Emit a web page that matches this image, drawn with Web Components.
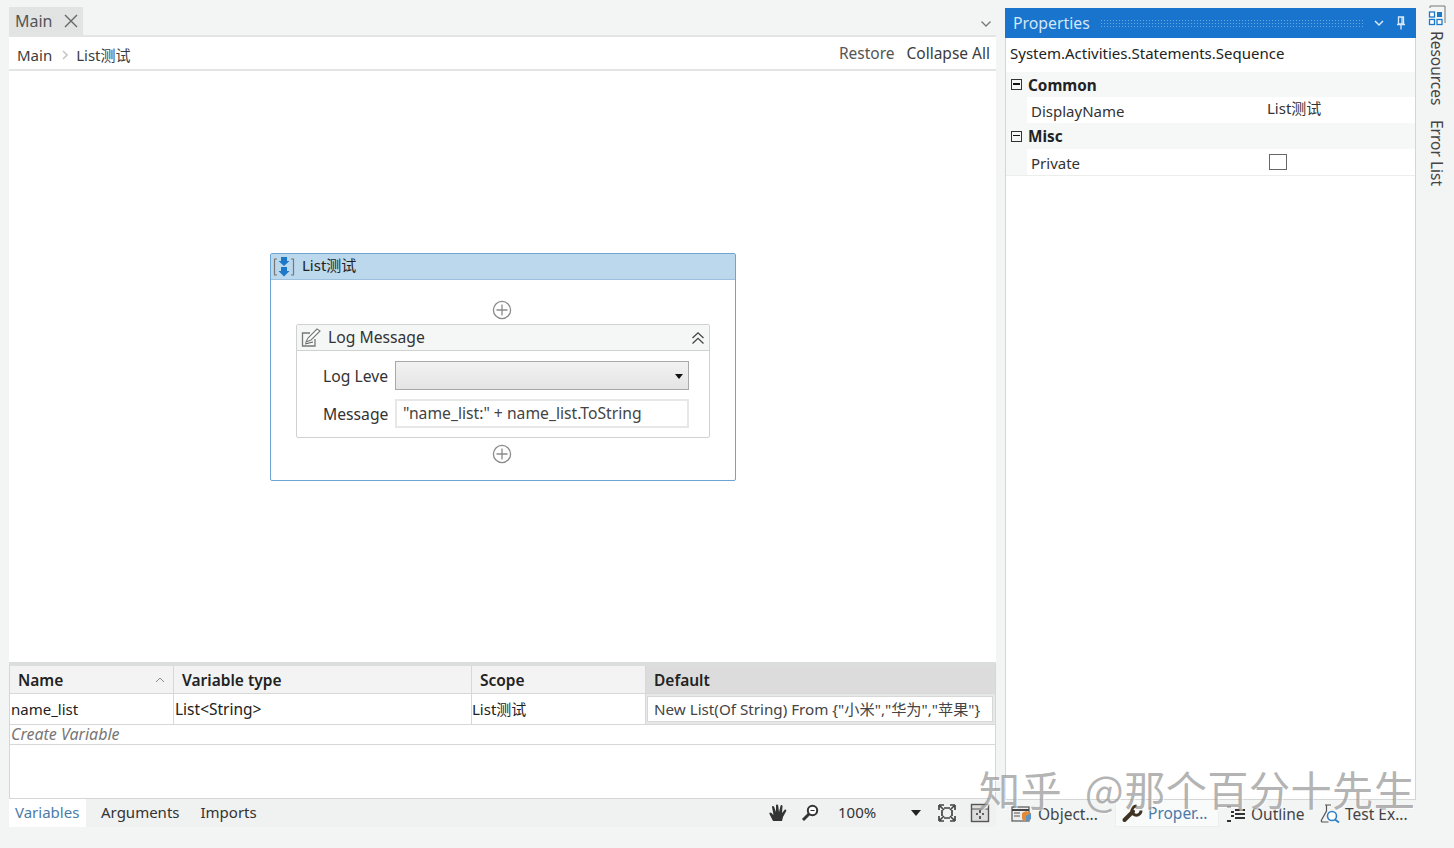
<!DOCTYPE html>
<html lang="zh"><head><meta charset="utf-8"><title>Main</title>
<style>
html,body{margin:0;height:100%;}
body{background:#f3f5f5;font:15px "Noto Sans","Noto Sans CJK SC",sans-serif;color:#333;overflow:hidden;}
</style></head><body>
<ide-app>
  <doc-pane slot="doc">
    <doc-tabs></doc-tabs>
    <doc-crumbs></doc-crumbs>
    <design-canvas>
      <seq-card title-text="List测试">
        <log-card></log-card>
      </seq-card>
    </design-canvas>
    <var-panel></var-panel>
    <var-tabs></var-tabs>
  </doc-pane>
  <props-pane slot="props"></props-pane>
  <dock-tabs slot="props"></dock-tabs>
  <side-strip slot="side"></side-strip>
  <wm-mark slot="over">知乎 @那个百分十先生</wm-mark>
</ide-app>
<script>
function def(name,css,html){
  customElements.define(name,class extends HTMLElement{
    constructor(){super();const r=this.attachShadow({mode:'open'});
      r.innerHTML='<style>'+css+'</style>'+(typeof html==='function'?html(this):html);}
  });
}
const plus='<svg width="20" height="20" viewBox="0 0 20 20"><circle cx="10" cy="10" r="8.6" fill="#fff" stroke="#8a8a8a" stroke-width="1.3"/><path d="M10 4.5v11M4.5 10h11" stroke="#8a8a8a" stroke-width="1.3"/></svg>';

def('ide-app',`:host{display:block;width:1454px;height:848px;position:relative;overflow:hidden}
.r{display:flex;height:100%;padding-left:9px;box-sizing:border-box}
.d{width:987px;flex:none}.p{width:411px;margin-left:9px;flex:none;padding-top:8px;box-sizing:border-box}.s{flex:1}`,
`<div class="r"><div class="d"><slot name="doc"></slot></div><div class="p"><slot name="props"></slot></div><div class="s"><slot name="side"></slot></div></div><slot name="over"></slot>`);

def('doc-pane',`:host{display:block}`,`<slot></slot>`);

def('doc-tabs',`:host{display:flex;height:35px;align-items:flex-end;justify-content:space-between;position:relative}
.t{width:74px;height:28px;background:#e2e4e4;display:flex;align-items:center;gap:11px;padding-left:6px;box-sizing:border-box;font-size:16px;color:#555}
svg{display:block}.c{margin:0 4px 7px 0}`,
`<div class="t">Main<svg width="14" height="14" viewBox="0 0 14 14"><path d="M1 1l12 12M13 1L1 13" stroke="#666" stroke-width="1.4" fill="none"/></svg></div>
<svg class="c" width="12" height="8" viewBox="0 0 12 8"><path d="M1.5 1.5L6 6l4.5-4.5" stroke="#777" stroke-width="1.3" fill="none"/></svg>`);

def('doc-crumbs',`:host{display:flex;height:36px;box-sizing:border-box;background:#fff;border-top:2px solid #e3e5e5;border-bottom:2px solid #e3e5e5;align-items:center;padding:4px 6px 0 8px;font-size:15px;color:#3c3c3c}
.a{margin:0 10px 0 0}.g{margin-right:8px;display:flex}.sp{flex:1}.re{color:#555;margin-right:12px}.l{position:relative;top:-2px;font-size:15.5px}.li{position:relative;top:-1px}`,
`<span class="a">Main</span><span class="g"><svg width="6" height="10" viewBox="0 0 6 10"><path d="M1 1l4 4-4 4" stroke="#c8c8c8" stroke-width="1.6" fill="none"/></svg></span><span class="li">List测试</span><span class="sp"></span><span class="re l">Restore</span><span class="l">Collapse All</span>`);

def('design-canvas',`:host{display:block;height:591px;box-sizing:border-box;background:#fff;padding:182px 0 0 261px}`,`<slot></slot>`);

def('seq-card',`:host{display:block;width:466px;height:228px;box-sizing:border-box;border:1px solid #6ea4d2;border-radius:2px;background:#fff}
.h{height:25px;background:#bcd8ec;border-bottom:1px solid #9cc0dd;display:flex;align-items:center;padding-left:2px;gap:7px;font-size:15px;color:#222}
.h span{padding-bottom:5px}
.pl{display:flex;justify-content:center;padding-right:2px}.a{padding:20px 2px 4px 0}.b{padding-top:6px}
.m{padding:0 25px}svg{display:block}`,
(el)=>`<div class="h"><svg width="22" height="22" viewBox="0 0 22 22"><path d="M4 3H1.500v16H4M18 3h2.500v16H18" stroke="#777" stroke-width="1.200" fill="none"/><path d="M8 1h6v4h2.500L11 10 5.500 5H8z" fill="#1e78c8"/><path d="M8 11h6v4h2.500L11 20.500 5.500 15H8z" fill="#1e78c8"/></svg><span>${el.getAttribute('title-text')}</span></div>
<div class="pl a">${plus}</div><div class="m"><slot></slot></div><div class="pl b">${plus}</div>`);

def('log-card',`:host{display:block;height:114px;box-sizing:border-box;border:1px solid #d0d2d2;border-radius:2px;background:#fff}
.h{height:25px;background:#f5f7f7;border-bottom:1px solid #d0d2d2;display:flex;align-items:center;font-size:15.700px;color:#333;padding:0 4px 0 3px}
.h span{margin-left:7px;flex:1;padding-bottom:2px}
.r{display:flex;align-items:center;padding-left:26px;color:#333;font-size:15.700px}
.r label{width:72px;flex:none}
.cb{width:294px;height:29px;box-sizing:border-box;border:1px solid #a8a8a8;background:linear-gradient(#f2f2f2,#e4e4e4);position:relative}
.cb i{position:absolute;right:5px;top:12px;border:4px solid transparent;border-top:5px solid #111;border-bottom:0}
.in{width:294px;height:29px;box-sizing:border-box;border:2px solid #e6e8e8;background:#fff;padding-left:6px;line-height:25px;color:#444;font-size:15.700px;white-space:nowrap}
.r1{margin-top:10px}.r2{margin-top:9px}svg{display:block}`,
`<div class="h"><svg width="21" height="21" viewBox="0 0 21 21"><path d="M10 6H2.500v13H15v-7" fill="none" stroke="#777" stroke-width="1.300"/><path d="M6 15l2-4 9-9 3 2-9 9z" fill="#fff" stroke="#777" stroke-width="1.100"/><path d="M5 17l8-2" stroke="#555" stroke-width="1"/></svg><span>Log Message</span><svg width="14" height="14" viewBox="0 0 14 14"><path d="M1.500 7L7 1.800 12.500 7M1.500 12.500L7 7.300l5.500 5.200" stroke="#444" stroke-width="1.300" fill="none"/></svg></div>
<div class="r r1"><label>Log Leve</label><div class="cb"><i></i></div></div>
<div class="r r2"><label>Message</label><div class="in">"name_list:" + name_list.ToString</div></div>`);

def('var-panel',`:host{display:block;height:137px;box-sizing:border-box;background:#fff;border-top:4px solid #dcdede;border-bottom:1px solid #d6d6d6;border-left:1px solid #d6d6d6;border-right:1px solid #d6d6d6;font-size:15.5px}
.g{display:grid;grid-template-columns:164px 298px 174px 1fr}
.c{box-sizing:border-box;display:flex;align-items:center;white-space:nowrap;border-right:1px solid #d8d8d8}
.hd{height:28px;background:#f3f3f3;font-weight:600;color:#222;padding-left:8px;border-bottom:1px solid #d8d8d8;justify-content:space-between}
.d{height:31px;color:#222;border-bottom:1px solid #d8d8d8;padding-left:1px}
.nm{font-size:15px}.sc{padding-bottom:2px;padding-left:0;font-size:15px}
.sel{background:#dcdcdc;border-right:0}.ds{padding:2px 2px 2px 1px;background:#e6e8e8;border-right:0}
.in{flex:1;height:100%;box-sizing:border-box;background:#fff;border:1px solid #d8d8d8;display:flex;align-items:center;padding:0 0 3px 6px;color:#444;font-size:15.200px}
.cr{height:20px;border-bottom:1px solid #d8d8d8;font-style:italic;color:#777;padding-left:1px;line-height:19px;box-sizing:border-box;font-size:16px}
svg{display:block;margin-right:8px}`,
`<div class="g"><div class="c hd">Name<svg width="10" height="6" viewBox="0 0 10 6"><path d="M1 5l4-4 4 4" stroke="#888" fill="none"/></svg></div><div class="c hd">Variable type</div><div class="c hd">Scope</div><div class="c hd sel">Default</div>
<div class="c d nm">name_list</div><div class="c d">List&lt;String&gt;</div><div class="c d sc">List测试</div><div class="c d ds"><div class="in">New List(Of String) From {"小米","华为","苹果"}</div></div></div>
<div class="cr">Create Variable</div>`);

def('var-tabs',`:host{display:flex;height:28px;background:#f0f1f1;align-items:center;font-size:15px;color:#333;position:relative}
.t{padding:0 6px;height:100%;display:flex;align-items:center;width:65px;background:#fff;color:#4a7ba8;flex:none}
span,.t{padding-bottom:2px}.t{box-sizing:content-box;height:26px}
.o{margin-left:15px}.o+.o{margin-left:21px}.sp{flex:1}svg{display:block;flex:none}
.z{width:73px;color:#333;margin-left:19px}`,
`<div class="t">Variables</div><span class="o">Arguments</span><span class="o">Imports</span><span class="sp"></span>
<svg width="20" height="20" viewBox="0 0 20 20"><path d="M5 18L1.500 11c-.5-1.500 1-2 2-1L5.500 12 4 4c0-1.500 1.800-1.500 2.200 0L8 9 8 2.500c0-1.500 2-1.500 2.200 0L11 9l1.500-6c.4-1.500 2.200-1 2 .5L14 10l2.500-3c1-1 2.300 0 1.600 1.200L15 14l-1 4z" fill="#333"/></svg>
<svg style="margin-left:13px" width="18" height="18" viewBox="0 0 18 18"><circle cx="11.500" cy="6.500" r="4.700" fill="#fff" stroke="#333" stroke-width="2"/><path d="M8 10L2 16" stroke="#333" stroke-width="3"/><path d="M9.500 6.500h4" stroke="#333"/></svg>
<span class="z">100%</span>
<svg width="10" height="6" viewBox="0 0 10 6"><path d="M0 0h10L5 6z" fill="#222"/></svg>
<svg style="margin-left:16px" width="20" height="20" viewBox="0 0 20 20"><path d="M2 2h5M2 2v5M18 2h-5M18 2v5M2 18h5M2 18v-5M18 18h-5M18 18v-5M3 3l4 4M17 3l-4 4M3 17l4-4M17 17l-4-4M7 5h6M7 15h6M5 7v6M15 7v6" stroke="#444" stroke-width="1.700" fill="none"/></svg>
<svg style="margin:0 6px 0 13px" width="20" height="20" viewBox="0 0 20 20"><rect x="1.500" y="1.500" width="17" height="17" fill="#ddd" stroke="#555" stroke-width="1.400"/><path d="M1.500 6h17" stroke="#555"/><path d="M10 7v3M6 11h2M12 11h2M10 13v3" stroke="#333" stroke-width="1.500"/></svg>`);

def('props-pane',`:host{display:block;height:792px;box-sizing:border-box;background:#fff;border:1px solid #d4d6d6;border-top:0;font-size:15px;color:#222}
.t{height:30px;background:#1874cd;margin:0 -1px;display:flex;align-items:center;color:#d4e6f8;padding:0 10px 0 8px;font-size:15.800px;gap:10px}
.dots{flex:1;height:8px;background-image:radial-gradient(#6aa8e4 .9px,transparent 1px);background-size:3px 3px}
svg{display:block;flex:none}
.sub{height:34px;line-height:31px;padding-left:4px;white-space:nowrap}
.gr{height:25px;display:flex;align-items:center;background:#f6f7f7;font-weight:700;padding-left:5px;gap:6px;font-size:15.300px}
.gr.m{height:26px}
.b{width:11px;height:11px;box-sizing:border-box;border:1.300px solid #333;position:relative;flex:none}
.b:after{content:"";position:absolute;left:1px;right:1px;top:3px;height:1.500px;background:#111}
.rw{height:26px;display:flex;background:linear-gradient(90deg,#f6f7f7 21px,#fff 21px);padding-left:25px;align-items:center;color:#333}
.n{width:236px;flex:none;position:relative;top:1px}
.chk{width:18px;height:16px;box-sizing:border-box;border:1px solid #666;background:#fff;margin-left:2px}
.rw2{height:27px;border-bottom:1px solid #eceeee;box-sizing:border-box}.v{position:relative;top:-3px}`,
`<div class="t"><span>Properties</span><span class="dots"></span><svg width="10" height="7" viewBox="0 0 10 7"><path d="M1 1l4 4 4-4" stroke="#dce9f7" stroke-width="1.500" fill="none"/></svg><svg style="margin-left:2px" width="10" height="14" viewBox="0 0 10 14"><path d="M2.500 1h5v7h-5zM1 8.500h8M5 8.500v5M6 1.500v6" stroke="#dce9f7" stroke-width="1.300" fill="none"/></svg></div>
<div class="sub">System.Activities.Statements.Sequence</div>
<div class="gr"><span class="b"></span>Common</div>
<div class="rw"><span class="n">DisplayName</span><span class="v">List测试</span></div>
<div class="gr m"><span class="b"></span>Misc</div>
<div class="rw rw2"><span class="n">Private</span><span class="chk"></span></div>`);

def('dock-tabs',`:host{display:flex;height:27px;align-items:center;font-size:15.500px;color:#444;position:relative}
.t{display:flex;align-items:center;gap:5px;height:100%;white-space:nowrap;box-sizing:border-box;padding-left:6px}
.a{color:#4a7ba8;background:#f9fafa;border:1px solid #eceeee;border-top:0;width:104px;padding-left:5px;margin-left:2px}
svg{display:block;flex:none}`,
`<div class="t" style="width:108px"><svg width="22" height="18" viewBox="0 0 22 18"><rect x="1" y="2" width="17" height="14" fill="#eee" stroke="#555" stroke-width="1.200"/><path d="M1 5h17" stroke="#444" stroke-width="2"/><path d="M3 8h6M3 11h6" stroke="#555"/><path d="M15 6l5 2v6l-5 3-4-3V8z" fill="#e08a3a"/><path d="M15 11l5-3v6l-5 3z" fill="#5e93c8"/></svg>Object...</div>
<div class="t a"><svg width="22" height="20" viewBox="0 0 22 20"><path d="M3.500 17L12 8.500" stroke="#3f3424" stroke-width="4" stroke-linecap="round"/><path d="M15.500 3a4.600 4.600 0 1 0 4.500 4.500" stroke="#3f3424" stroke-width="3" fill="none"/></svg>Proper...</div>
<div class="t" style="width:99px;padding-left:7px"><svg width="20" height="18" viewBox="0 0 20 18"><path d="M1 2h4M1 16h4M9 5h10M9 9h10M9 13h10" stroke="#333" stroke-width="2.200"/><path d="M5 6h3v2H5zM5 10h3v2H5z" fill="#333"/></svg>Outline</div>
<div class="t" style="padding-left:2px"><svg width="20" height="20" viewBox="0 0 20 20"><path d="M5 1h6M6.500 1v6L1.500 16c-.5 1 0 2 1 2h6" stroke="#555" stroke-width="1.200" fill="none"/><circle cx="12" cy="12" r="4.500" fill="#fff" stroke="#2f7fc4" stroke-width="1.600"/><path d="M15 15.500l4 3" stroke="#2f7fc4" stroke-width="1.800"/></svg>Test Ex...</div>`);

def('side-strip',`:host{display:flex;flex-direction:column;align-items:center;padding:5px 0 0 3px;font-size:15.500px;color:#444}
.v{writing-mode:vertical-rl;white-space:nowrap}svg{display:block}`,
`<svg width="20" height="26" viewBox="0 0 20 26"><path d="M3 3V1h15v17" fill="none" stroke="#777"/><rect x="2.500" y="7" width="5" height="5" fill="#fff" stroke="#1e78c8" stroke-width="1.300"/><rect x="10" y="7" width="5" height="5" fill="#1e78c8"/><rect x="2.500" y="14.500" width="5" height="5" fill="#fff" stroke="#1e78c8" stroke-width="1.300"/><rect x="10" y="14.500" width="5" height="5" fill="#fff" stroke="#1e78c8" stroke-width="1.300"/></svg>
<span class="v">Resources</span><span class="v" style="margin-top:15px">Error List</span>`);

def('wm-mark',`:host{position:absolute;left:979px;top:758px;font:41.200px "Noto Sans CJK SC","Noto Sans",sans-serif;color:rgba(115,115,115,.55);white-space:nowrap;text-shadow:1px 1px 0 rgba(255,255,255,.7);pointer-events:none;letter-spacing:.4px;word-spacing:13px}`,`<slot></slot>`);
</script>
</body></html>
